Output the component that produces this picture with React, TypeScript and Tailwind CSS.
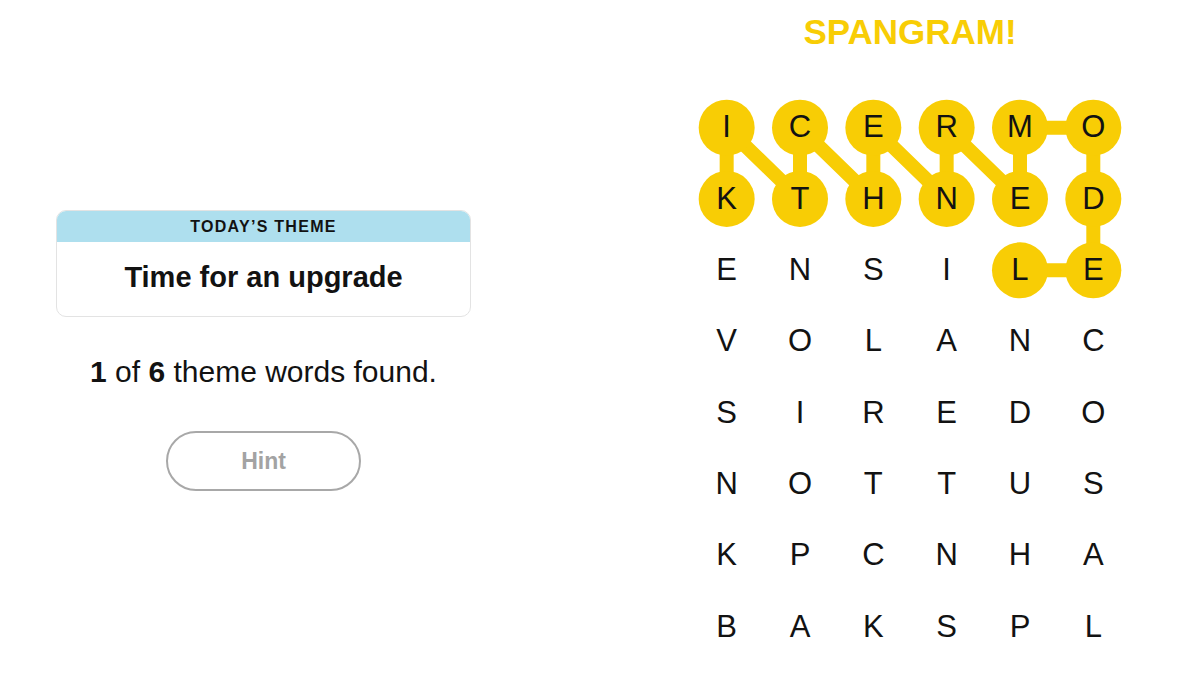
import React from 'react'

const GRID = [
  'ICERMO',
  'KTHNED',
  'ENSILE',
  'VOLANC',
  'SIREDO',
  'NOTTUS',
  'KPCNHA',
  'BAKSPL',
]

// spangram path: K I T C H E N R E M O D E L
const PATH: [number, number][] = [
  [1, 0], [0, 0], [1, 1], [0, 1], [1, 2], [0, 2], [1, 3],
  [0, 3], [1, 4], [0, 4], [0, 5], [1, 5], [2, 5], [2, 4],
]

const CW = 73.33
const RH = 71.33

const cx = (c: number) => CW / 2 + c * CW
const cy = (r: number) => RH / 2 + r * RH

function Board() {
  const points = PATH.map(([r, c]) => `${cx(c)},${cy(r)}`).join(' ')

  return (
    <div className="relative w-[440px]">
      <svg className="absolute inset-0" width={440} height={570.67} viewBox="0 0 440 570.67">
        <polyline points={points} fill="none" stroke="#f8cd05" strokeWidth={14} strokeLinejoin="round" />
        {PATH.map(([r, c]) => (
          <circle key={`${r}-${c}`} cx={cx(c)} cy={cy(r)} r={28} fill="#f8cd05" />
        ))}
      </svg>
      <div className="relative grid grid-cols-6">
        {GRID.map((row, r) =>
          row.split('').map((ch, c) => (
            <div key={`${r}-${c}`} className="flex h-[71.33px] items-center justify-center text-[31px] text-[#121212]">
              {ch}
            </div>
          ))
        )}
      </div>
    </div>
  )
}

export default function App() {
  return (
    <div className="flex h-[675px] w-[1200px] bg-white text-[#121212] [font-family:'Liberation_Sans',Arial,sans-serif]">
      {/* Left side - theme card */}
      <div className="w-[690px] pl-[56px] pt-[210px]">
        <div className="w-[415px]">
          <div className="overflow-hidden rounded-[10px] border border-[#e3e3e3]">
            <div className="flex h-[31px] items-center justify-center bg-[#aedfee] text-[16px] font-bold tracking-[0.08em]">
              TODAY’S THEME
            </div>
            <div className="flex h-[74px] items-center justify-center pb-[3px] text-[29px] font-bold">
              Time for an upgrade
            </div>
          </div>

          <p className="mt-[40px] text-center text-[30px] leading-none">
            <b>1</b> of <b>6</b> theme words found.
          </p>

          <div className="mt-[44px] flex justify-center">
            <button className="h-[60px] w-[195px] rounded-full border-2 border-[#a8a8a8] text-[23px] font-bold text-[#a3a3a3]">
              Hint
            </button>
          </div>
        </div>
      </div>

      {/* Right side - board */}
      <div className="flex w-[440px] flex-col">
        <div className="pt-[14px] text-center text-[35px] font-bold leading-none text-[#f8cd05]">
          SPANGRAM!
        </div>
        <div className="mt-[43px]">
          <Board />
        </div>
      </div>
    </div>
  )
}
